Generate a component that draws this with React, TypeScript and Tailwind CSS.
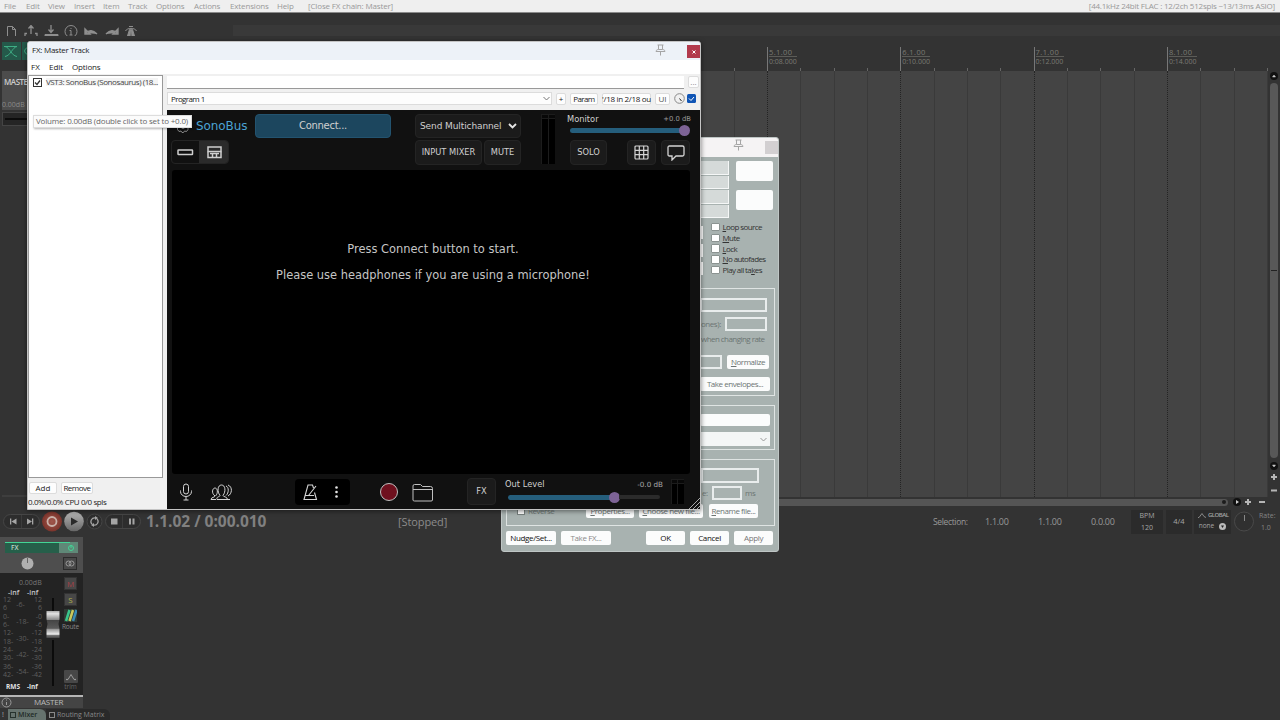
import type { ReactNode } from "react"
import { clsx } from "clsx"

const MENU = [
    { label: "File", w: "w-[22px]" },
    { label: "Edit", w: "w-[22px]" },
    { label: "View", w: "w-[26px]" },
    { label: "Insert", w: "w-[29px]" },
    { label: "Item", w: "w-[25px]" },
    { label: "Track", w: "w-[28px]" },
    { label: "Options", w: "w-[38px]" },
    { label: "Actions", w: "w-[36px]" },
    { label: "Extensions", w: "w-[47px]" },
    { label: "Help", w: "w-[31px]" },
    { label: "[Close FX chain: Master]", w: "w-[90px]" },
]

// one entry per beat, measures carry a label
const BEATS = [
    null, null, ["5.1.00", "0:08.000"],
    null, null, null, ["6.1.00", "0:10.000"],
    null, null, null, ["7.1.00", "0:12.000"],
    null, null, null, ["8.1.00", "0:14.000"],
    null, null, null,
]

function MenuBar() {
    return (
        <div className="flex h-[13px] items-center border-b border-[#8a8a8a] bg-[#efefef] pb-[1px] pl-1 text-[8px] leading-none tracking-[-0.15px] text-[#999]">
            {MENU.map((m) => (
                <span key={m.label} className={clsx("whitespace-nowrap", m.w)}>{m.label}</span>
            ))}
            <span className="ml-auto pr-[5px] whitespace-nowrap tracking-[-0.22px]">[44.1kHz 24bit FLAC : 12/2ch 512spls ~13/13ms ASIO]</span>
        </div>
    )
}

function Toolbar() {
    return (
        <div className="flex h-[23px] bg-[#333] pt-3">
            <div className="w-[233px]">
                <svg width="233" height="14" viewBox="0 25 233 14" fill="none" stroke="#8e8e8e" strokeWidth="1">
                    <path d="M7.500 26.500h5l3 3v8h-8zM12.500 26.500v3h3" />
                    <path d="M27 33.500h-2v4h12v-4h-2M31 34v-8M28.500 28.500l2.500-3 2.500 3" strokeWidth="1.300" />
                    <path d="M45 34.500h13v3h-13z" fill="#8e8e8e" />
                    <path d="M51 25v7M48.500 29.500l2.500 3 2.500-3" strokeWidth="1.300" />
                    <circle cx="71" cy="31.500" r="6" />
                    <path d="M71 30.500v4.500M69.500 30.500h1.500M69.500 35h3M71 28v1" />
                    <path d="M86 33c3-3.500 7-3 11 1M85 29v5h5z" strokeWidth="1.400" fill="#8e8e8e" />
                    <path d="M117 33c-3-3.500-7-3-11 1M118 29v5h-5z" strokeWidth="1.400" fill="#8e8e8e" />
                    <path d="M129.500 29.500h1l-.5 8h-3zM132.500 29.500h-1l.5 8h3z" fill="#8e8e8e" />
                    <path d="M125.500 31c1.500-3.500 9.500-3.500 11 0M129 26.500h4M125 37.500h3M134 37.500h3" />
                </svg>
            </div>
            <div className="h-[11px] flex-1 bg-[#393939]" />
        </div>
    )
}

function TrackPanel() {
    return (
        <div className="flex w-[700px] flex-col bg-[#333] pt-[6px] pl-[2px]">
            <div className="flex h-[18px] gap-[1px]">
                <svg width="19" height="18" className="bg-[#24594a]" fill="none" stroke="#3fae85">
                    <path d="M2 4.500h13M3 4.500c5 1 6 9 12 10M15 4.500c-5 1-6 9-12 10" />
                </svg>
                <svg width="10" height="18" className="bg-[#24594a]" fill="none" stroke="#3fae85">
                    <path d="M8 6a3.500 3.500 0 1 0 0 6" />
                </svg>
            </div>
            <div className="mt-[11px] flex h-[39px] w-[300px] flex-col justify-between bg-[#4c4c4c] pt-[7px] pb-[2px]">
                <span className="pl-[2px] text-[8px] leading-none font-semibold tracking-[-0.5px] text-[#ccc]">MASTER</span>
                <span className="text-[7px] leading-none text-[#8a8a8a]">0.00dB</span>
            </div>
            <div className="mt-[2px] h-[14px] w-[300px] border border-[#444] bg-[#252525] pt-[5px]">
                <div className="ml-[2px] h-[2px] bg-[#0c0c0c]" />
            </div>
            <div className="mt-auto h-[2px] bg-[#3e3e3e]" />
        </div>
    )
}

function RoundArrow({ d }: { d: string }) {
    return (
        <svg width="8" height="8" viewBox="0 0 8 8" className="mt-px block shrink-0">
            <circle cx="4" cy="4" r="4" fill="#111" />
            <path d={d} fill="#ccc" stroke="#ccc" strokeWidth="0.5" />
        </svg>
    )
}

function Arrange() {
    return (
        <div className="flex h-[461px] overflow-hidden">
            <TrackPanel />
            <div className="flex w-[568px] flex-col overflow-hidden">
                <div className="flex h-[35px] items-end bg-[#333] pl-[0.3px]">
                    {BEATS.map((b, i) => (
                        <div
                            key={i}
                            className={clsx(
                                "w-[33.33px] shrink-0 border-l whitespace-nowrap",
                                b ? "h-6 border-[#777]" : "h-[3px] border-[#666]",
                            )}
                        >
                            {b && (
                                <div className="w-[29px] pt-[0.5px] pl-[1px] text-[7.500px] leading-[8px] text-[#7b7b74]">
                                    <div className="border-b border-[#5c5c58] tracking-[0.4px]">{b[0]}</div>
                                    <div className="pt-[1px] text-[7px] tracking-[0px]">{b[1]}</div>
                                </div>
                            )}
                        </div>
                    ))}
                </div>
                <div className="flex flex-1 bg-[#444] pl-[0.3px]">
                    {BEATS.map((b, i) => (
                        <div
                            key={i}
                            className={clsx(
                                "w-[33.33px] shrink-0 border-l",
                                b ? "border-dotted border-[#242424]" : "border-[#3a3a3a]",
                            )}
                        />
                    ))}
                </div>
            </div>
            <div className="flex flex-1 flex-col items-center bg-[#333] pt-[35px] pr-[1px]">
                <RoundArrow d="M2.500 5l1.500-2 1.500 2z" />
                <div className="mt-[3px] flex h-[375px] w-2 items-center rounded-full bg-[#585858]">
                    <div className="mx-auto h-px w-1.5 bg-[#222]" />
                </div>
                <div className="mt-[3px]"><RoundArrow d="M2.500 3l1.500 2 1.500-2z" /></div>
                <svg width="8" height="20" className="mt-[3px]" stroke="#b5b5b5" strokeWidth="2">
                    <path d="M1 4h6M4 1v6M1 17.500h6" />
                </svg>
            </div>
        </div>
    )
}

function HScroll() {
    return (
        <div className="flex h-[10px] items-center bg-[#333]">
            <div className="h-[1px] w-[27px]" />
            <div className="flex h-[7px] w-[1201px] items-center justify-end rounded-r-full bg-[#555] pr-[2px]">
                <div className="h-1 w-1 rounded-full bg-[#1c1c1c]" />
            </div>
            <svg width="44" height="10" viewBox="0 0 44 10" className="ml-[4px]">
                <circle cx="5" cy="5" r="4" fill="#111" />
                <path d="M4 3l3 2-3 2z" fill="#ccc" />
                <path d="M13 5h6M16 2v6M27 5h6" stroke="#b5b5b5" strokeWidth="2" />
            </svg>
        </div>
    )
}

function Transport() {
    return (
        <div className="flex h-[30px] items-center bg-[#333] text-[9px] leading-none text-[#999]">
            <svg width="145" height="30" viewBox="0 507 145 30">
                <defs>
                    <radialGradient id="rec"><stop offset="0" stopColor="#a0574c" /><stop offset="1" stopColor="#7c342b" /></radialGradient>
                    <linearGradient id="play" x1="0" y1="0" x2="0" y2="1"><stop offset="0" stopColor="#b5b5b5" /><stop offset="1" stopColor="#666" /></linearGradient>
                </defs>
                <g fill="#2d2d2d" stroke="#464646">
                    <rect x="3.500" y="514.500" width="36" height="14" rx="7" />
                    <circle cx="94.500" cy="521.500" r="7.500" />
                    <rect x="105.500" y="514.500" width="35" height="14" rx="7" />
                </g>
                <path d="M21.500 515v13M122.500 515v13" stroke="#3c3c3c" />
                <g fill="#a5a5a5">
                    <path d="M10 518.500h1.300v6h-1.300zM16.500 518.500v6l-5-3zM32 518.500h1.300v6h-1.300zM27 518.500v6l5-3z" />
                    <path d="M111 518.500h6.500v6h-6.500zM129 518.500h2v6h-2zM132.500 518.500h2v6h-2z" />
                </g>
                <circle cx="52" cy="521.500" r="10" fill="url(#rec)" />
                <circle cx="52" cy="521.500" r="4.500" fill="none" stroke="#c9b0a8" strokeWidth="1.800" />
                <circle cx="74" cy="521.500" r="9.800" fill="url(#play)" />
                <path d="M71 517.500v8l7-4z" fill="#292929" />
                <path d="M92 524.200a3.700 3.700 0 0 1 3.500-6.200M97 518.800a3.700 3.700 0 0 1-3.500 6.200" fill="none" stroke="#a5a5a5" strokeWidth="1.200" />
                <path d="M95 516l3 2-3 2zM94 523l-3 2 3 2z" fill="#a5a5a5" />
            </svg>
            <span className="ml-[1px] w-[252px] text-[15.500px] font-bold tracking-[-0.020px] whitespace-nowrap text-[#808080]">1.1.02 / 0:00.010</span>
            <span className="w-[535px] pb-[1px] text-[11px] tracking-[-0.1px] text-[#8c8c8c]">[Stopped]</span>
            <span className="w-[52px] text-[8.500px] tracking-[-0.35px]">Selection:</span>
            <span className="w-[53px] pb-[1px] tracking-[-0.3px]">1.1.00</span>
            <span className="w-[53px] pb-[1px] tracking-[-0.3px]">1.1.00</span>
            <span className="w-[40px] pb-[1px] tracking-[-0.3px]">0.0.00</span>
            <div className="flex h-[24px] w-[32px] flex-col items-center justify-between bg-[#2b2b2b] pt-[2px] pb-[3px] text-[7px] text-[#a5a5a5]">
                <span>BPM</span>
                <span>120</span>
            </div>
            <div className="ml-[3px] flex h-[24px] w-[26px] items-center justify-center bg-[#2b2b2b] pb-[1px] text-[7.500px] text-[#a5a5a5]">4/4</div>
            <div className="ml-[2px] flex h-[24px] w-[37px] flex-col justify-between bg-[#2b2b2b] pt-[1px] pb-[3px] pl-[4px] text-[6px] font-semibold text-[#a5a5a5]">
                <div className="flex h-[8px] items-center gap-[2px]">
                    <svg width="8" height="5" fill="none" stroke="#888"><path d="M0 4.500h1l3-4 2 3 2 1" /></svg>
                    <span className="tracking-[-0.5px]">GLOBAL</span>
                </div>
                <div className="flex h-[10px] items-center gap-[4px]">
                    <span className="w-[17px] text-center text-[6.500px] font-normal">none</span>
                    <svg width="7" height="7"><circle cx="3.500" cy="3.500" r="3.500" fill="#bbb" /><path d="M2 2.500h3l-1.500 2.500z" fill="#222" /></svg>
                </div>
            </div>
            <svg width="22" height="22" className="ml-[2px]">
                <circle cx="11" cy="10.500" r="9.500" fill="#303030" stroke="#4a4a4a" />
                <path d="M11.500 4v6" stroke="#888" />
            </svg>
            <div className="ml-[4px] flex h-[24px] flex-col justify-between pt-[2px] pb-[3px] text-[7px] text-[#858585]">
                <span>Rate:</span>
                <span className="pl-[2px]">1.0</span>
            </div>
        </div>
    )
}

const SCALE_OUT = ["12", "6", "0-", "6-", "12-", "18-", "24-", "30-", "36-", "42-"]
const SCALE_RIGHT = ["12", "6", "-0", "-6", "-12", "-18", "-24", "-30", "-36", "-42"]
const SCALE_MID = ["-6-", "-18-", "-30-", "-42-", "-54-"]

function MixerStrip() {
    return (
        <div className="flex h-[171px] w-[83px] flex-col bg-[#232323]">
            <div className="h-[36px] bg-[#4e4e4e] pt-[5px] pl-[5px]">
                <div className="flex h-[11px] w-[73px]">
                    <span className="flex-1 border-t border-[#43d596] bg-[#265f4a] pl-[6px] text-[6.500px] leading-[10px] font-semibold text-[#bfd6cb]">FX</span>
                    <svg width="19" height="11" className="bg-[#5f8877]" fill="none" stroke="#43d596"><circle cx="12" cy="6" r="2.500" /><path d="M12 3v3M0 0.500h11" /></svg>
                </div>
                <div className="mt-[4px] flex items-center justify-between pr-[6px] pl-[16px]">
                    <svg width="13" height="13"><circle cx="6.500" cy="6.500" r="6" fill="#b0b0b0" /><path d="M6.500 1v5" stroke="#666" /></svg>
                    <svg width="14" height="13" fill="none" stroke="#999"><rect x="0.500" y="0.500" width="13" height="12" fill="#484848" stroke="#2b2b2b" /><circle cx="5.500" cy="6.500" r="2.500" /><circle cx="8.500" cy="6.500" r="2.500" /></svg>
                </div>
            </div>
            <div className="flex h-[122px] text-[7px] leading-none text-[#5f5f5f]">
                <div className="flex w-[44px] shrink-0 flex-col pt-[6px]">
                    <span className="pl-[19px] whitespace-nowrap text-[#777]">0.00dB</span>
                    <div className="mt-[3px] flex gap-[6px] pl-[8px] text-[7px] font-semibold text-[#c5c5c5]">
                        <span className="w-[13px]">-inf</span><span>-inf</span>
                    </div>
                    <div className="flex h-[82px] justify-between pr-[2px] pl-[3px]">
                        <div className="flex flex-col justify-between">{SCALE_OUT.map((s) => <span key={s}>{s}</span>)}</div>
                        <div className="flex flex-col justify-between pt-[5px] pb-[3px]">{SCALE_MID.map((s) => <span key={s}>{s}</span>)}</div>
                        <div className="flex flex-col justify-between text-right">{SCALE_RIGHT.map((s) => <span key={s}>{s}</span>)}</div>
                    </div>
                    <div className="mt-[6px] flex gap-[7px] pl-[6px] text-[6.500px] font-bold text-[#e0e0e0]">
                        <span className="w-[14px]">RMS</span><span>-inf</span>
                    </div>
                </div>
                <div className="flex w-[17px] shrink-0 flex-col items-center pt-[25px]">
                    <div className="h-[13px] w-[2px] bg-[#0b0b0b]" />
                    <svg width="14" height="29">
                        <defs>
                            <linearGradient id="cap" x1="0" y1="0" x2="0" y2="1">
                                <stop offset="0" stopColor="#aaa" /><stop offset="0.100" stopColor="#e2e2e2" /><stop offset="0.320" stopColor="#8a8a8a" />
                                <stop offset="0.340" stopColor="#444" /><stop offset="0.640" stopColor="#5a5a5a" /><stop offset="0.680" stopColor="#999" />
                                <stop offset="0.860" stopColor="#eee" /><stop offset="0.900" stopColor="#777" /><stop offset="1" stopColor="#444" />
                            </linearGradient>
                        </defs>
                        <path d="M0.500 0h13v8l-1 5 1 5v9h-13v-9l1-5-1-5z" fill="url(#cap)" />
                    </svg>
                    <div className="h-[46px] w-[2px] bg-[#0b0b0b]" />
                </div>
                <div className="flex w-[19px] shrink-0 flex-col items-center pt-[4px]">
                    <span className="h-[13px] w-[13px] border border-[#333] bg-[#474747] text-center text-[8px] leading-[12px] text-[#a33f46]">M</span>
                    <span className="mt-[3px] h-[13px] w-[13px] border border-[#333] bg-[#474747] text-center text-[8px] leading-[11px] text-[#b0b04c]">S</span>
                    <svg width="13" height="13" className="mt-[3px] shrink-0" strokeWidth="2.500">
                        <rect width="13" height="13" fill="#303a35" />
                        <path d="M2 12l3.500-11" stroke="#3ac58b" /><path d="M5.500 12l3.500-11" stroke="#c9c95b" /><path d="M9 12l3.500-11" stroke="#398cb5" />
                    </svg>
                    <span className="mt-[2px] text-[6.500px] tracking-[-0.2px] text-[#888]">Route</span>
                    <svg width="14" height="13" className="mt-[39px] shrink-0" fill="none" stroke="#999">
                        <rect width="14" height="13" rx="1" fill="#474747" stroke="none" /><path d="M2 9.500h2l3-5 3 5h2" /><circle cx="3" cy="9.500" r="0.500" /><circle cx="11" cy="9.500" r="0.500" />
                    </svg>
                    <span className="mt-[1px] text-[6.500px] text-[#666]">trim</span>
                </div>
            </div>
            <div className="flex h-[13px] items-center border-t-2 border-[#b5b5b5] bg-[#444] pb-[1px] text-[8px] leading-none text-[#bbb]">
                <svg width="13" height="11" className="ml-px" fill="none" stroke="#999"><circle cx="5.500" cy="5.500" r="4.500" /><path d="M5.500 5v3M5.500 2.500v1" /></svg>
                <span className="ml-[20px] tracking-[-0.2px]">MASTER</span>
            </div>
        </div>
    )
}

function DockTabs() {
    return (
        <div className="flex h-[12px] items-end bg-[#333] text-[7px] leading-[10px]">
            <span className="w-[8px] pl-[2px] text-[#aaa]">!</span>
            <span className="flex h-[11px] w-[38px] items-center gap-[2px] rounded-tr-md bg-[#66736e] pl-[2px] font-semibold text-[#1f2a26]">
                <span className="h-[6px] w-[6px] border border-[#26322d]" />Mixer
            </span>
            <span className="flex h-[11px] w-[64px] items-center gap-[2px] rounded-tr-md bg-[#292929] pl-[3px] tracking-[-0.050px] whitespace-nowrap text-[#888]">
                <span className="h-[6px] w-[6px] border border-[#888]" />Routing Matrix
            </span>
        </div>
    )
}

function Pin({ className }: { className?: string }) {
    return (
        <svg width="11" height="12" viewBox="0 0 11 12" fill="none" stroke="#a5a5a5" className={className}>
            <path d="M2.500 1h6M3.500 1v4.500M7.500 1v4.500M1 7.500c0-1.500 1.500-2 2.500-2h4c1 0 2.500.5 2.500 2zM5.500 7.500v4" />
        </svg>
    )
}

function DlgButton({ children, className }: { children?: ReactNode; className?: string }) {
    return (
        <span className={clsx("flex shrink-0 items-center justify-center rounded-[2px] bg-[#fbfcfc] whitespace-nowrap", className)}>
            <span>{children}</span>
        </span>
    )
}

const CHECKS = [["", "L", "oop source"], ["", "M", "ute"], ["", "L", "ock"], ["", "N", "o autofades"], ["Play all ta", "k", "es"]]

function ItemProperties() {
    return (
        <div className="absolute top-[137px] left-[501px] flex h-[415px] w-[278px] flex-col overflow-hidden rounded-[3px] border border-[#bfc6c5] bg-[#a8b2b0] text-[8px] leading-none tracking-[-0.45px] text-[#333]">
            <div className="flex h-[19px] shrink-0 items-start justify-end bg-[#f5f3f4]">
                <Pin className="mt-[1px] mr-[21px]" />
                <div className="mt-[3px] h-[13px] w-[13px] bg-[#d2cfd1]" />
            </div>
            <div className="flex h-[62px] shrink-0 pt-[4px] pl-[199px]">
                <div className="flex w-[28px] flex-col gap-[1px]">
                    {[0, 1, 2, 3].map((i) => (
                        <div key={i} className="h-[13.500px] border-r border-b border-[#f5f7f7] bg-[#d5dad9]" />
                    ))}
                </div>
                <div className="ml-[7px] flex flex-col gap-[9px]">
                    <DlgButton className="h-[20px] w-[37px]" />
                    <DlgButton className="h-[20px] w-[37px]" />
                </div>
            </div>
            <div className="flex h-[69px] shrink-0 pl-[199px]">
                <div className="flex w-[2px] flex-col gap-[5px] pt-[7px]">
                    <div className="h-[13px] bg-white" /><div className="h-[13px] bg-white" /><div className="h-[13px] bg-white" />
                </div>
                <div className="ml-[8px] flex flex-col gap-[2.800px] pt-[4px] tracking-[-0.6px]">
                    {CHECKS.map(([a, u, b]) => (
                        <div key={u + b} className="flex h-[8px] items-center gap-[3px] whitespace-nowrap">
                            <span className="h-[8.500px] w-[8.500px] rounded-[1px] border border-[#8b9391] bg-white" />
                            <span>{a}<u>{u}</u>{b}</span>
                        </div>
                    ))}
                </div>
            </div>
            <div className="mr-[3px] ml-[4px] flex h-[108px] shrink-0 flex-col border border-[#dfe4e3] pt-[9px] pl-[193px] text-[#6c7573]">
                <div className="h-[14px] w-[67px] shrink-0 border-2 border-[#e9eded]" />
                <div className="mt-[5px] flex h-[14px] items-center">
                    <span className="w-[25px] pl-[1px]">ones):</span><div className="h-[14px] w-[42px] border-2 border-[#e9eded]" />
                </div>
                <span className="mt-[4px] h-[8px] pl-[1px] tracking-[-0.55px] whitespace-nowrap">when changing rate</span>
                <div className="mt-[12px] flex gap-[5px]">
                    <div className="h-[14px] w-[22px] border-2 border-l-0 border-[#e9eded]" />
                    <DlgButton className="h-[14px] w-[42px]"><u>N</u>ormalize</DlgButton>
                </div>
                <DlgButton className="mt-[8px] h-[14px] w-[70px]">Take envelopes...</DlgButton>
            </div>
            <div className="mt-[9px] mr-[3px] ml-[4px] flex h-[45px] shrink-0 flex-col border border-[#dfe4e3] pt-[8px] pl-[193px]">
                <DlgButton className="h-[12px] w-[70px]" />
                <div className="mt-[6px] flex h-[14px] w-[70px] items-center justify-end bg-[#f4f6f6] pr-[3px]">
                    <svg width="7" height="5" fill="none" stroke="#999"><path d="M0.500 1l3 3 3-3" /></svg>
                </div>
            </div>
            <div className="mt-[9px] mr-[3px] ml-[4px] flex h-[67px] shrink-0 flex-col border border-[#dfe4e3] pt-[8px] pl-[10px] text-[#6c7573]">
                <div className="ml-[184px] h-[15px] w-[58px] shrink-0 border-2 border-[#e9eded]" />
                <div className="mt-[3px] ml-[184px] flex h-[14px] items-center">
                    <span className="w-[11px] pl-[1px]">e:</span><div className="h-[14px] w-[30px] border-2 border-[#e9eded]" /><span className="ml-[3px]">ms</span>
                </div>
                <div className="mt-[4px] flex items-center">
                    <span className="h-[8px] w-[8px] border border-[#777f7d] bg-white" />
                    <span className="w-[61px] pl-[3px]">Reverse</span>
                    <DlgButton className="h-[14px] w-[48px]"><u>P</u>roperties...</DlgButton>
                    <DlgButton className="ml-[5px] h-[14px] w-[64px]"><u>C</u>hoose new file...</DlgButton>
                    <DlgButton className="ml-[6px] h-[14px] w-[49px]"><u>R</u>ename file...</DlgButton>
                </div>
            </div>
            <div className="mt-[5px] flex shrink-0 pl-[4px] tracking-[-0.35px] text-[#111]">
                <DlgButton className="h-[14px] w-[50px]">Nudge/Set...</DlgButton>
                <DlgButton className="ml-[5px] h-[14px] w-[50px] text-[#8b8b8b]">Take FX...</DlgButton>
                <DlgButton className="ml-[35px] h-[14px] w-[39px]">OK</DlgButton>
                <DlgButton className="ml-[5px] h-[14px] w-[39px]">Cancel</DlgButton>
                <DlgButton className="ml-[5px] h-[14px] w-[39px] text-[#777]">Apply</DlgButton>
            </div>
        </div>
    )
}

function Pad({ children, className }: { children?: ReactNode; className?: string }) {
    return (
        <div className={clsx("flex shrink-0 items-center rounded-[4px] border border-[#242424] bg-[#1b1b1b] whitespace-nowrap", className)}>
            {children}
        </div>
    )
}

function Meter({ className }: { className?: string }) {
    return (
        <div className={clsx("flex gap-[1px] bg-[#1c1c1c] p-[0.500px]", className)}>
            {[0, 1].map((i) => (
                <div key={i} className="flex flex-1 flex-col gap-[1px]">
                    <div className="h-[3px] bg-[#080808]" />
                    <div className="flex-1 bg-black" />
                </div>
            ))}
        </div>
    )
}

function SonoBusHeader() {
    return (
        <div className="flex h-[60px] shrink-0 pt-[4px] text-[8.300px] text-[#d0d0d0]">
            <div className="w-[248px]">
                <div className="flex h-[24px] items-center">
                    <svg width="14" height="14" viewBox="0 0 14 14" className="mt-[2px] ml-[9px]" fill="none" stroke="#888">
                        <path d="M5.500 1h3l.5 2 2 1 2-.5.500 3-1.500 1 0 2-1.500 2-2-.5-1 1.500h-1.500l-1-1.500-2 .5-1.500-2V7.500l-1.500-1 .5-3 2 .5 2-1z" />
                        <circle cx="7" cy="6.500" r="2" />
                    </svg>
                    <span className="ml-[6px] w-[59px] text-[12px] tracking-[-0.1px] text-[#4ba3d4]">SonoBus</span>
                    <div className="flex h-[24px] w-[136px] items-center justify-center rounded-[4px] border border-[#23536f] bg-[#1c465e] text-[10px] tracking-[-0.3px]">Connect...</div>
                </div>
                <div className="mt-[2px] ml-[4px] flex h-[24px] w-[58px] overflow-hidden rounded-[4px] border border-[#242424]">
                    <svg width="28" height="22" fill="none" stroke="#cfcfcf" strokeWidth="1.500"><rect x="6" y="9" width="14.500" height="4.500" rx="0.500" /></svg>
                    <svg width="30" height="22" className="bg-[#2b2b2b]" fill="none" stroke="#cfcfcf" strokeWidth="1.500">
                        <rect x="9" y="6" width="13" height="4.500" /><path d="M9 10.500v6h13v-6M13.500 13v4M17.500 13v4M11 12.500h9" />
                    </svg>
                </div>
            </div>
            <div className="flex w-[126px] flex-col gap-[2px]">
                <Pad className="h-[24px] w-[106px] justify-between pr-[3px] pl-[4px]">
                    <span className="text-[9px] tracking-[-0.1px]">Send Multichannel</span>
                    <svg width="9" height="6" fill="none" stroke="#e5e5e5" strokeWidth="1.800"><path d="M1 1l3.500 3.500 3.500-3.500" /></svg>
                </Pad>
                <div className="flex gap-[2px]">
                    <Pad className="h-[25px] w-[67px] justify-center">INPUT MIXER</Pad>
                    <Pad className="h-[25px] w-[37px] justify-center">MUTE</Pad>
                </div>
            </div>
            <Meter className="h-[50px] w-[14px]" />
            <div className="ml-[12px] w-[124px]">
                <div className="flex h-[10px] items-center justify-between">
                    <span>Monitor</span><span className="text-[6.800px] text-[#999]">+0.0 dB</span>
                </div>
                <div className="ml-[3px] flex h-[13px] w-[120px] items-center">
                    <div className="h-[5px] w-[110px] rounded-l-full bg-[#255e7c]" />
                    <div className="-ml-[1px] h-[11px] w-[11px] rounded-full bg-[#7d6396]" />
                </div>
                <div className="mt-[3px] ml-[3px] flex">
                    <Pad className="h-[25px] w-[37px] justify-center">SOLO</Pad>
                    <Pad className="ml-[20px] h-[25px] w-[29px] justify-center">
                        <svg width="15" height="15" fill="none" stroke="#d5d5d5" strokeWidth="1.200"><rect x="1" y="1" width="13" height="13" rx="1" /><path d="M5.300 1v13M9.700 1v13M1 5.300h13M1 9.700h13" /></svg>
                    </Pad>
                    <Pad className="ml-[5px] h-[25px] w-[29px] justify-center">
                        <svg width="18" height="16" fill="none" stroke="#d5d5d5" strokeWidth="1.300"><path d="M2.500 1h13q1.500 0 1.500 1.500v7q0 1.500-1.500 1.500h-6.500l-4 4v-4h-2.500q-1.500 0-1.500-1.500v-7q0-1.500 1.500-1.500z" /></svg>
                    </Pad>
                </div>
            </div>
        </div>
    )
}

function SonoBusFooter() {
    return (
        <div className="flex h-[35px] shrink-0 items-center text-[8.300px] text-[#d0d0d0]">
            <svg width="70" height="26" viewBox="167 479 70 26" fill="none" stroke="#d4d4d4">
                <rect x="183.500" y="484" width="5" height="10" rx="2.500" />
                <path d="M180.500 490.500v1a5.500 5 0 0 0 11 0v-1M186 496.500v3.500M183.500 500h5" />
                <path d="M211 499.500c0-2.500 4-2 4-3.500-4-3-2.500-8 0-8s3.500 5 .5 8M217 499.500c-1-3 3-2.500 3-4-3-4-2.500-10.500 1.500-10.500s4.500 6.500 1.500 10.500c0 1.500 4.500 1 4.500 4M217 499.500h13M211 499.500h5M226 486c3 1 3 7 0 9.500M228 485c5 2 4 9 0 11" />
            </svg>
            <div className="ml-[58px] flex h-[26px] w-[55px] items-center rounded-[4px] bg-black">
                <svg width="55" height="26" viewBox="295 479 55 26" fill="none" stroke="#d4d4d4" strokeWidth="1.100">
                    <path d="M313.500 488l-1-3h-4.500l-4 14.500h12.500l-2-7M308.500 495.500l7.500-9.500M305 495.500h9" />
                    <g fill="#e5e5e5" stroke="none"><circle cx="336.500" cy="487.500" r="1.300" /><circle cx="336.500" cy="492" r="1.300" /><circle cx="336.500" cy="496.500" r="1.300" /></g>
                </svg>
            </div>
            <svg width="56" height="22" viewBox="379 481 56 22" className="ml-[29px]" fill="none" stroke="#c0c0c0">
                <circle cx="389" cy="492" r="8.500" fill="#6f101e" />
                <path d="M413 500v-14q0-1.500 1.500-1.500h6l2 2h8q2 0 2 2v11.500q0 1-1.500 1h-16.500q-1.500 0-1.500-1zM413 489.500h19.500" />
            </svg>
            <Pad className="ml-[32px] h-[27px] w-[29px] justify-center">FX</Pad>
            <div className="ml-[9px] w-[158px]">
                <div className="flex h-[10px] items-center justify-between">
                    <span className="pb-[1px]">Out Level</span><span className="pb-[1px] text-[7.200px] text-[#aaa]">-0.0 dB</span>
                </div>
                <div className="mt-[1px] flex h-[12px] items-center pl-[3px]">
                    <div className="h-[5px] w-[102px] rounded-l-full bg-[#255e7c]" />
                    <div className="-mx-[1px] h-[11px] w-[11px] shrink-0 rounded-full bg-[#7d6396]" />
                    <div className="h-[4px] w-[41px] rounded-r-full bg-[#2b2b2b]" />
                </div>
            </div>
            <Meter className="ml-[8px] h-[25px] w-[13px]" />
            <svg width="12" height="12" className="-mr-[1px] ml-auto self-end" stroke="#aaa"><path d="M0 12l12-12M4 12l8-8M8 12l4-4" /></svg>
        </div>
    )
}

function SonoBus() {
    return (
        <div className="mt-[5px] flex flex-1 flex-col bg-[#111] font-['DejaVu_Sans',sans-serif] leading-none">
            <SonoBusHeader />
            <div className="mr-[10px] ml-[5px] flex flex-1 flex-col items-center rounded-[3px] bg-black pt-[74px] pl-[4px] text-[11.450px] text-[#c5c5c5]">
                <span>Press Connect button to start.</span>
                <span className="mt-[15px]">Please use headphones if you are using a microphone!</span>
            </div>
            <SonoBusFooter />
        </div>
    )
}

function WinButton({ children, className }: { children?: ReactNode; className?: string }) {
    return (
        <span className={clsx("flex h-[12px] shrink-0 items-center justify-center rounded-[2px] border border-[#dcdcdc] bg-[#fdfdfd] whitespace-nowrap", className)}>
            {children}
        </span>
    )
}

function FxWindow() {
    return (
        <div className="absolute top-[41px] left-[27px] flex h-[469px] w-[674px] flex-col overflow-hidden rounded-t-[3px] border border-[#c4c4c4] bg-[#f0f0f0] text-[8px] leading-none text-[#222] shadow-[0_1px_5px_rgba(0,0,0,0.5)]">
            <div className="flex h-[18px] shrink-0 items-center bg-[#edf2f8] pb-[2px] pl-[4px]">
                <span className="tracking-[-0.25px]">FX: Master Track</span>
                <Pin className="ml-auto" />
                <div className="mt-[3px] ml-[21px] flex h-[13px] w-[13px] items-center justify-center bg-[#b23a4c]">
                    <svg width="4" height="4" stroke="#fff"><path d="M0.500 0.500l3 3M3.500 0.500l-3 3" /></svg>
                </div>
            </div>
            <div className="flex h-[14px] shrink-0 items-center bg-white pl-[3px]">
                <span className="w-[18px]">FX</span>
                <span className="w-[23px]">Edit</span>
                <span className="tracking-[-0.15px]">Options</span>
            </div>
            <div className="flex flex-1">
                <div className="flex w-[139px] flex-col">
                    <div className="mt-[1px] h-[403px] w-[135px] border border-[#999] bg-white pt-[1px] pl-[4px]">
                        <div className="flex h-[10px] items-center whitespace-nowrap">
                            <svg width="9" height="9" fill="none" stroke="#333"><rect x="0.500" y="0.500" width="8" height="8" /><path d="M2 4.500l2 2 3-4" strokeWidth="1.300" /></svg>
                            <span className="ml-[4px] bg-[#f4f4f4] tracking-[-0.42px] text-[#444]">VST3: SonoBus (Sonosaurus) (18...</span>
                        </div>
                    </div>
                    <div className="mt-[4px] flex gap-[4px] pl-[1px]">
                        <WinButton className="w-[28px]">Add</WinButton>
                        <WinButton className="w-[32px]"><span className="tracking-[-0.5px]">Remove</span></WinButton>
                    </div>
                    <span className="mt-[4px] tracking-[-0.4px]">0.0%/0.0% CPU 0/0 spls</span>
                </div>
                <div className="flex flex-1 flex-col pt-[2px]">
                    <div className="flex h-[13px] gap-[4px]">
                        <div className="h-[13px] w-[517px] border-b border-[#999] bg-white" />
                        <WinButton className="w-[11px] text-[#888]">...</WinButton>
                    </div>
                    <div className="mt-[3px] flex h-[13px] items-center">
                        <div className="flex h-[13px] w-[385px] items-center justify-between border border-[#dcdcdc] bg-[#fdfdfd] pr-[1px] pl-[3px]">
                            <span className="tracking-[-0.6px]">Program 1</span>
                            <svg width="7" height="5" fill="none" stroke="#777"><path d="M0.500 1l3 3 3-3" /></svg>
                        </div>
                        <WinButton className="ml-[4px] w-[10px]">+</WinButton>
                        <WinButton className="ml-[4px] w-[28px]"><span className="tracking-[-0.6px]">Param</span></WinButton>
                        <WinButton className="ml-[4px] w-[49px]"><span className="tracking-[-0.3px]">'/18 in 2/18 ou</span></WinButton>
                        <WinButton className="ml-[4px] w-[15px] text-[#555]">UI</WinButton>
                        <svg width="11" height="11" className="ml-[4px]" fill="none" stroke="#888"><circle cx="5.500" cy="5.500" r="4.800" /><path d="M5.500 5.500l2 2.500" stroke="#222" /></svg>
                        <svg width="9" height="9" className="ml-[2px]"><rect width="9" height="9" rx="1.500" fill="#1055b5" /><path d="M2 4.500l2 2 3-3.500" fill="none" stroke="#fff" /></svg>
                    </div>
                    <SonoBus />
                </div>
            </div>
        </div>
    )
}

export default function App() {
    return (
        <div className="relative h-[720px] w-[1280px] overflow-hidden bg-[#333] font-['Open_Sans','Noto_Sans',sans-serif]">
            <MenuBar />
            <Toolbar />
            <Arrange />
            <HScroll />
            <Transport />
            <MixerStrip />
            <DockTabs />
            <ItemProperties />
            <FxWindow />
            <div className="absolute top-[115px] left-[33px] flex h-[13px] w-[159px] items-center border border-[#ddd] bg-[#fbfbfb] pb-[1px] pl-[2px] text-[8px] leading-none tracking-[-0.180px] whitespace-nowrap text-[#666] shadow-[1px_1px_2px_rgba(0,0,0,0.3)]">
                Volume: 0.00dB (double click to set to +0.0)
            </div>
        </div>
    )
}
